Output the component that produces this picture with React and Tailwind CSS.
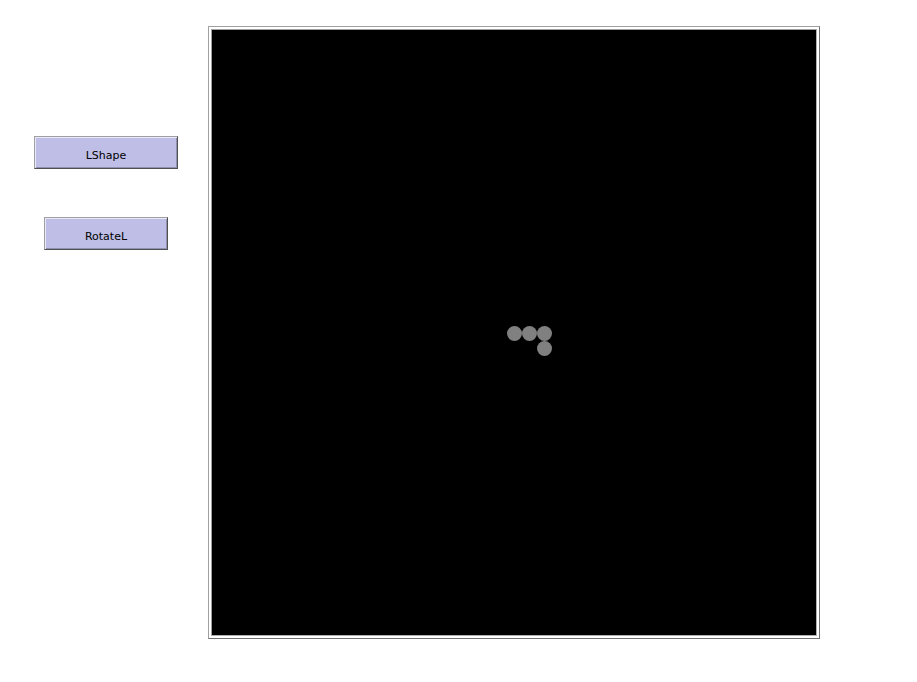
import React from "react";

const cells = [
  [0, 0],
  [1, 0],
  [2, 0],
  [2, 1],
];

const Btn = ({ label, width }) => (
  <button
    className={`${width} h-[33px] pt-[5px] bg-[#bebee6] border border-t-[#a0a0a0] border-l-[#a0a0a0] border-r-[#505050] border-b-[#505050] text-[11px] text-black leading-none shadow-[inset_1px_1px_0_#e8e8f8,inset_-1px_-1px_0_#9090b0]`}
    style={{ fontFamily: '"DejaVu Sans", Tahoma, sans-serif' }}
  >
    {label}
  </button>
);

export default function App() {
  return (
    <div className="w-[917px] h-[682px] bg-white flex items-start">
      <div className="w-[208px] pl-[4px] pt-[136px] flex flex-col items-center gap-[48px]">
        <Btn label="LShape" width="w-[144px]" />
        <Btn label="RotateL" width="w-[124px]" />
      </div>
      <div className="mt-[26px] border border-t-[#a0a0a0] border-l-[#a0a0a0] border-r-[#707070] border-b-[#707070] bg-white p-[2px]">
        <div className="border border-t-[#a0a0a0] border-l-[#a0a0a0] border-r-[#b0b0b0] border-b-[#b0b0b0]">
          <div className="relative w-[604px] h-[605px] bg-black">
            {cells.map(([cx, cy], i) => (
              <div
                key={i}
                className="absolute w-[15px] h-[15px] rounded-full bg-[#808080]"
                style={{ left: 295 + cx * 15, top: 296 + cy * 15 }}
              />
            ))}
          </div>
        </div>
      </div>
    </div>
  );
}
